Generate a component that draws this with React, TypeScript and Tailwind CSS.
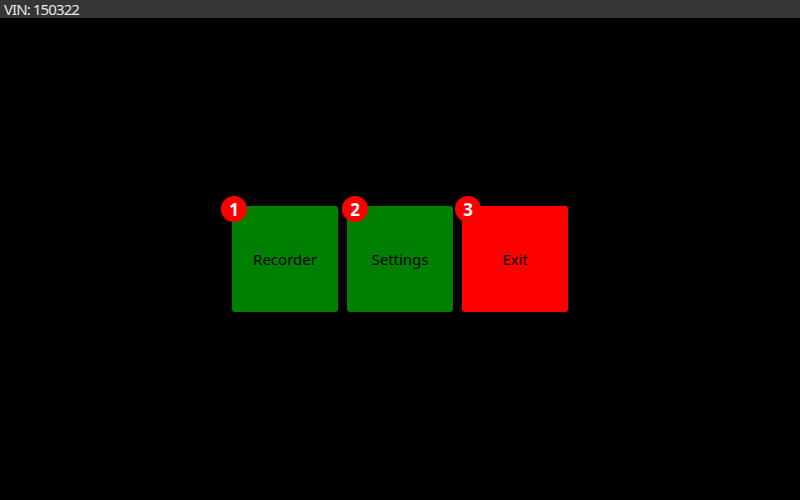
import React from "react";

const items = [
  { label: "Recorder", n: "1", bg: "bg-[#008000]", badge: "left-[-11px]" },
  { label: "Settings", n: "2", bg: "bg-[#008000]", badge: "left-[-5px]" },
  { label: "Exit", n: "3", bg: "bg-[#ff0000]", badge: "left-[-7px]" },
];

export default function App() {
  return (
    <div
      className="w-[800px] h-[500px] bg-black flex flex-col overflow-hidden"
      style={{ fontFamily: '"Noto Sans", "DejaVu Sans", sans-serif' }}
    >
      <div className="h-[18px] bg-[#353535] text-[#e8e8e8] text-[15px] leading-[18px] pl-[4px] tracking-[-0.9px]">
        VIN: 150322
      </div>
      <div className="flex-1 flex items-center justify-center gap-[9px]">
        {items.map((it) => (
          <div
            key={it.n}
            className={`relative w-[106px] h-[106px] rounded-[3px] ${it.bg} flex items-center justify-center text-black text-[15px]`}
          >
            {it.label}
            <div
              className={`absolute top-[-10px] ${it.badge} w-[26px] h-[26px] rounded-full bg-[#ff0000] text-white text-[17px] font-bold flex items-center justify-center leading-none`}
            >
              {it.n}
            </div>
          </div>
        ))}
      </div>
    </div>
  );
}
